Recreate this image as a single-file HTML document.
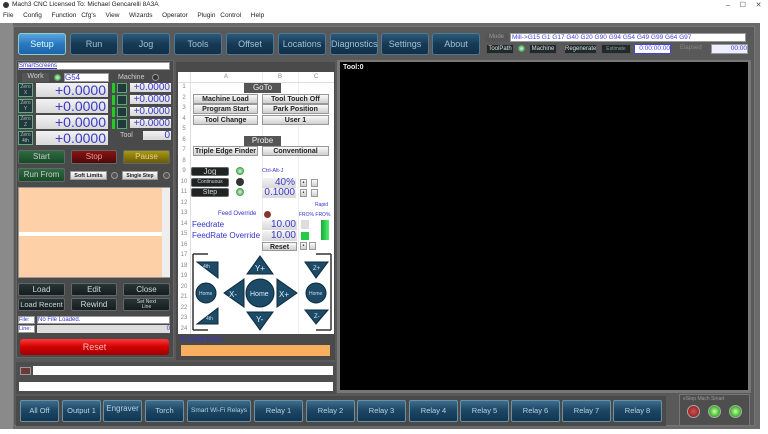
<!DOCTYPE html><html><head><meta charset="utf-8"><style>
*{margin:0;padding:0;box-sizing:border-box}
body{width:768px;height:434px;overflow:hidden;background:#fff;font-family:"Liberation Sans",sans-serif;position:relative}
div,span{position:absolute}
.t{white-space:nowrap}
.tab{top:33px;height:22px;width:48px;border-radius:3px;background:linear-gradient(#2c5a7a,#173a55 50%,#123049);border:1px solid #4a7a98;color:#9cc3dc;font-size:9px;text-align:center;line-height:20px;white-space:nowrap}
.dk{background:#1f2a2c;border:1px solid #555;color:#ddd;text-align:center;font-size:7px;white-space:nowrap}
.wf{background:#fff;border:1px solid #999}
.dro{background:linear-gradient(#f2f2f2,#d8d8d8);color:#3a3ac8;text-align:right;font-size:14px;line-height:14px;padding-right:2px}
.mdro{background:linear-gradient(#f2f2f2,#d8d8d8);color:#3a3ac8;text-align:right;font-size:10px;line-height:9px;padding-right:1px}
.zb{background:#1e3a3a;border:1px solid #6a8;color:#bbb;font-size:5px;text-align:center;line-height:6px}
.gb{background:#1e3a3a;border:1px solid #5a7;color:#bbb;font-size:4px;text-align:center}
.bb{background:linear-gradient(#2a3436,#151d1f);border:1px solid #5c6a6a;color:#cfd8d8;font-size:8px;text-align:center;border-radius:2px;white-space:nowrap;overflow:hidden}
.sb{background:linear-gradient(#fafafa,#cfcfcf);border:1px solid #999;font-size:7px;font-weight:bold;text-align:center;line-height:9px;color:#222;white-space:nowrap}
.rn{left:178px;width:12px;font-size:6px;color:#888;text-align:center}
.bl{top:400px;height:22px;background:linear-gradient(#3e6d8c,#1d4866 45%,#123650);border:1px solid #6a90a8;border-radius:2px;color:#b8d2e4;font-size:7.5px;text-align:center;line-height:20px;white-space:nowrap}
.led{border-radius:50%;background:radial-gradient(#cfe,#5a5 60%,#263);}
.arr{fill:#1d4a66;stroke:#0d2a3c}
</style></head><body>
<div style="left:0;top:0;width:768px;height:10px;background:#fff"></div>
<div style="left:3px;top:2px;width:6px;height:6px;border-radius:50%;background:#333"></div>
<div class="t" style="left:12px;top:1px;font-size:6.5px;color:#222">Mach3 CNC  Licensed To: Michael Gencarelli 8A3A</div>
<div class="t" style="left:726px;top:1px;font-size:7px;color:#444">–&nbsp;&nbsp;&nbsp;&nbsp;&nbsp;☐&nbsp;&nbsp;&nbsp;&nbsp;&nbsp;✕</div>
<div class="t" style="left:3px;top:12px;font-size:6.5px;color:#222;word-spacing:3px">File &nbsp;Config &nbsp;Function&nbsp;Cfg's &nbsp;View &nbsp;Wizards &nbsp;Operator &nbsp;Plugin&nbsp;Control &nbsp;Help</div>
<div style="left:0;top:23px;width:760px;height:406px;background:#6b6b6b"></div>
<div style="left:0;top:23px;width:13px;height:406px;background:#8a8a8a"></div>
<div style="left:13px;top:26px;width:742px;height:400px;background:#595959;border:1px solid #777"></div>
<div class="tab" style="left:18px;background:linear-gradient(#5aa6e0,#2a78c0 50%,#1e64a8);color:#dff;border-color:#8cc">Setup</div>
<div class="tab" style="left:70px">Run</div>
<div class="tab" style="left:122px">Jog</div>
<div class="tab" style="left:174px">Tools</div>
<div class="tab" style="left:226px">Offset</div>
<div class="tab" style="left:278px">Locations</div>
<div class="tab" style="left:330px">Diagnostics</div>
<div class="tab" style="left:381px">Settings</div>
<div class="tab" style="left:432px">About</div>
<div class="dk" style="left:485px;top:33px;width:23px;height:9px;background:#555;color:#999;line-height:7px;font-size:6px">Mode</div>
<div class="wf t" style="left:510px;top:33px;width:236px;height:9px;font-size:6.5px;color:#44d;line-height:7px;padding-left:1px">Mill-&gt;G15  G1 G17 G40 G20 G90 G94 G54 G49 G99 G64 G97</div>
<div class="dk" style="left:486px;top:44px;width:28px;height:10px;line-height:8px;font-size:6px">ToolPath</div>
<div class="led" style="left:518px;top:45px;width:7px;height:7px"></div>
<div class="dk" style="left:529px;top:44px;width:28px;height:10px;line-height:8px;font-size:6px">Machine</div>
<div class="dk" style="left:564px;top:44px;width:33px;height:10px;line-height:8px;font-size:6px">Regenerate</div>
<div class="dk" style="left:601px;top:44px;width:30px;height:10px;line-height:8px;font-size:5px;color:#999">Estimate</div>
<div class="wf" style="left:634px;top:44px;width:37px;height:10px;font-size:6.5px;color:#44d;line-height:8px;border-color:#44d;text-align:right">0:00:00:00</div>
<div class="t" style="left:680px;top:45px;font-size:6px;color:#888">Elapsed</div>
<div class="wf" style="left:711px;top:44px;width:37px;height:10px;font-size:6.5px;color:#44d;line-height:8px;text-align:right;background:#eef">00:00</div>
<div style="left:337px;top:60px;width:414px;height:333px;background:#777"></div>
<div style="left:340px;top:62px;width:408px;height:328px;background:#000"></div>
<div class="t" style="left:343px;top:64px;font-size:7px;color:#eee;font-weight:bold">Tool:0</div>
<div style="left:16px;top:60px;width:158px;height:298px;background:#4a4a4a;border:1px solid #666"></div>
<div class="wf t" style="left:18px;top:62px;width:152px;height:8px;font-size:6px;color:#33c;line-height:6px;text-decoration:underline">SmartScreens</div>
<div class="dk" style="left:22px;top:73px;width:27px;height:9px;background:#555;color:#ccc;font-size:7px;line-height:7px;border:none">Work</div>
<div class="led" style="left:54px;top:74px;width:7px;height:7px"></div>
<div class="wf t" style="left:64px;top:73px;width:45px;height:9px;color:#33c;font-size:8px;line-height:7px">G54</div>
<div class="t" style="left:118px;top:74px;font-size:7px;color:#ccc">Machine</div>
<div style="left:152px;top:74px;width:7px;height:7px;border-radius:50%;border:1px solid #999;background:#333"></div>
<div class="zb" style="left:18px;top:83px;width:15px;height:14px">Zero<br>X</div>
<div class="zb" style="left:18px;top:99px;width:15px;height:14px">Zero<br>Y</div>
<div class="zb" style="left:18px;top:115px;width:15px;height:14px">Zero<br>Z</div>
<div class="zb" style="left:18px;top:131px;width:15px;height:14px">Zero<br>4th</div>
<div class="dro" style="left:36px;top:83px;width:72px;height:14px">+0.0000</div>
<div class="dro" style="left:36px;top:99px;width:72px;height:14px">+0.0000</div>
<div class="dro" style="left:36px;top:115px;width:72px;height:14px">+0.0000</div>
<div class="dro" style="left:36px;top:131px;width:72px;height:14px">+0.0000</div>
<div style="left:112px;top:83px;width:3px;height:10px;background:#2c2"></div>
<div style="left:112px;top:95px;width:3px;height:10px;background:#2c2"></div>
<div style="left:112px;top:107px;width:3px;height:10px;background:#2c2"></div>
<div style="left:112px;top:119px;width:3px;height:10px;background:#2c2"></div>
<div class="gb" style="left:117px;top:83px;width:10px;height:10px"></div>
<div class="gb" style="left:117px;top:95px;width:10px;height:10px"></div>
<div class="gb" style="left:117px;top:107px;width:10px;height:10px"></div>
<div class="gb" style="left:117px;top:119px;width:10px;height:10px"></div>
<div class="mdro" style="left:130px;top:83px;width:41px;height:9px">+0.0000</div>
<div class="mdro" style="left:130px;top:95px;width:41px;height:9px">+0.0000</div>
<div class="mdro" style="left:130px;top:107px;width:41px;height:9px">+0.0000</div>
<div class="mdro" style="left:130px;top:119px;width:41px;height:9px">+0.0000</div>
<div class="t" style="left:120px;top:132px;font-size:7px;color:#ccc">Tool</div>
<div class="mdro" style="left:143px;top:131px;width:28px;height:9px;color:#33c">0</div>
<div class="bb" style="left:18px;top:150px;width:47px;height:14px;background:linear-gradient(#2f6a40,#174a28);color:#ccc;line-height:12px">Start</div>
<div class="bb" style="left:71px;top:150px;width:46px;height:14px;background:linear-gradient(#8a1414,#500808);color:#e99;line-height:12px">Stop</div>
<div class="bb" style="left:123px;top:150px;width:47px;height:14px;background:linear-gradient(#a89a10,#6a5a08);color:#ec8;line-height:12px">Pause</div>
<div class="bb" style="left:18px;top:168px;width:47px;height:14px;background:linear-gradient(#2f6a40,#174a28);color:#ccc;line-height:12px">Run From</div>
<div class="sb" style="left:70px;top:171px;width:37px;height:9px;font-size:5.5px">Soft Limits</div>
<div style="left:111px;top:172px;width:7px;height:7px;border-radius:50%;background:#555;border:1px solid #999"></div>
<div class="sb" style="left:122px;top:171px;width:36px;height:9px;font-size:5px">Single Step</div>
<div style="left:163px;top:172px;width:7px;height:7px;border-radius:50%;background:#555;border:1px solid #999"></div>
<div style="left:18px;top:187px;width:152px;height:91px;background:#fdd0a8;border:1px solid #999"></div>
<div style="left:19px;top:232px;width:143px;height:4px;background:#fff"></div>
<div style="left:162px;top:188px;width:8px;height:89px;background:#eee"></div>
<div class="bb" style="left:18px;top:283px;width:47px;height:13px;line-height:11px">Load</div>
<div class="bb" style="left:71px;top:283px;width:46px;height:13px;line-height:11px">Edit</div>
<div class="bb" style="left:123px;top:283px;width:47px;height:13px;line-height:11px">Close</div>
<div class="bb" style="left:18px;top:298px;width:47px;height:13px;line-height:11px;font-size:7.5px">Load Recent</div>
<div class="bb" style="left:71px;top:298px;width:46px;height:13px;line-height:11px">Rewind</div>
<div class="bb" style="left:123px;top:298px;width:47px;height:13px;font-size:5px;line-height:5px;padding-top:1px;white-space:normal">Set Next<br>Line</div>
<div class="wf t" style="left:18px;top:316px;width:17px;height:8px;font-size:5.5px;color:#33c;line-height:6px">File:</div>
<div class="wf t" style="left:37px;top:316px;width:133px;height:8px;font-size:6px;color:#33c;line-height:6px">No File Loaded.</div>
<div class="wf t" style="left:18px;top:325px;width:17px;height:8px;font-size:5.5px;color:#33c;line-height:6px">Line:</div>
<div class="t" style="left:37px;top:325px;width:133px;height:8px;background:#ddd;font-size:6px;line-height:8px;text-align:right;color:#33c">0</div>
<div style="left:20px;top:339px;width:149px;height:16px;border-radius:3px;background:linear-gradient(#ff3a3a,#d00000 50%,#a00000);color:#fbb;font-size:9px;text-align:center;line-height:16px">Reset</div>
<div style="left:176px;top:62px;width:159px;height:298px;background:#4a4a4a"></div>
<div style="left:178px;top:72px;width:156px;height:262px;background:#fff"></div>
<div style="left:190px;top:72px;width:1px;height:262px;background:#ddd"></div>
<div style="left:262px;top:72px;width:1px;height:262px;background:#eee"></div>
<div style="left:298px;top:72px;width:1px;height:262px;background:#eee"></div>
<div style="left:178px;top:82px;width:156px;height:1px;background:#ddd"></div>
<div class="t" style="left:224px;top:74px;font-size:6px;color:#888">A</div>
<div class="t" style="left:278px;top:74px;font-size:6px;color:#888">B</div>
<div class="t" style="left:314px;top:74px;font-size:6px;color:#888">C</div>
<div class="rn" style="top:84px">1</div><div class="rn" style="top:95px">2</div><div class="rn" style="top:105px">3</div><div class="rn" style="top:116px">4</div><div class="rn" style="top:126px">5</div><div class="rn" style="top:137px">6</div><div class="rn" style="top:147px">7</div><div class="rn" style="top:158px">8</div><div class="rn" style="top:168px">9</div><div class="rn" style="top:179px">10</div><div class="rn" style="top:189px">11</div><div class="rn" style="top:200px">12</div><div class="rn" style="top:210px">13</div><div class="rn" style="top:221px">14</div><div class="rn" style="top:231px">15</div><div class="rn" style="top:242px">16</div><div class="rn" style="top:252px">17</div><div class="rn" style="top:263px">18</div><div class="rn" style="top:273px">19</div><div class="rn" style="top:284px">20</div><div class="rn" style="top:294px">21</div><div class="rn" style="top:305px">22</div><div class="rn" style="top:315px">23</div><div class="rn" style="top:326px">24</div>
<div style="left:244px;top:83px;width:37px;height:10px;background:#555;color:#eee;font-size:8px;text-align:center;line-height:10px">GoTo</div>
<div class="sb" style="left:193px;top:94px;width:65px;height:10px">Machine Load</div>
<div class="sb" style="left:262px;top:94px;width:67px;height:10px">Tool Touch Off</div>
<div class="sb" style="left:193px;top:104px;width:65px;height:10px">Program Start</div>
<div class="sb" style="left:262px;top:104px;width:67px;height:10px">Park Position</div>
<div class="sb" style="left:193px;top:115px;width:65px;height:10px">Tool Change</div>
<div class="sb" style="left:262px;top:115px;width:67px;height:10px">User 1</div>
<div style="left:244px;top:136px;width:37px;height:10px;background:#555;color:#eee;font-size:8px;text-align:center;line-height:10px">Probe</div>
<div class="sb" style="left:193px;top:146px;width:65px;height:10px">Triple Edge Finder</div>
<div class="sb" style="left:262px;top:146px;width:67px;height:10px">Conventional</div>
<div class="bb" style="left:191px;top:167px;width:38px;height:9px;font-size:8px;line-height:7px;background:#222">Jog</div>
<div class="led" style="left:236px;top:167px;width:8px;height:8px"></div>
<div class="t" style="left:262px;top:168px;font-size:5.5px;color:#33c">Ctrl-Alt-J</div>
<div class="bb" style="left:191px;top:178px;width:38px;height:9px;font-size:5px;line-height:7px;background:#222">Continuous</div>
<div style="left:236px;top:178px;width:8px;height:8px;border-radius:50%;background:#333"></div>
<div class="bb" style="left:191px;top:188px;width:38px;height:9px;font-size:7px;line-height:7px;background:#222">Step</div>
<div class="led" style="left:236px;top:188px;width:8px;height:8px"></div>
<div class="mdro" style="left:262px;top:178px;width:34px;height:10px;line-height:10px">40%</div>
<div class="mdro" style="left:262px;top:188px;width:34px;height:10px;line-height:10px">0.1000</div>
<div class="sb" style="left:300px;top:179px;width:7px;height:8px;font-size:5px;line-height:6px">•</div>
<div class="sb" style="left:311px;top:179px;width:7px;height:8px"></div>
<div class="sb" style="left:300px;top:189px;width:7px;height:8px;font-size:5px;line-height:6px">•</div>
<div class="sb" style="left:311px;top:189px;width:7px;height:8px"></div>
<div class="t" style="left:315px;top:202px;font-size:5px;color:#33c">Rapid</div>
<div class="t" style="left:218px;top:211px;font-size:6px;color:#33c">Feed Override</div>
<div style="left:264px;top:211px;width:7px;height:7px;border-radius:50%;background:#833"></div>
<div class="t" style="left:299px;top:212px;font-size:5px;color:#33c">FRO% FRO%</div>
<div class="t" style="left:192px;top:220px;font-size:8px;color:#33c">Feedrate</div>
<div class="t" style="left:192px;top:231px;font-size:8px;color:#33c">FeedRate Override</div>
<div class="mdro" style="left:262px;top:220px;width:35px;height:10px;line-height:10px">10.00</div>
<div class="mdro" style="left:262px;top:231px;width:35px;height:10px;line-height:10px">10.00</div>
<div style="left:301px;top:220px;width:8px;height:9px;background:#ddd"></div>
<div style="left:301px;top:232px;width:8px;height:8px;background:#2c4"></div>
<div style="left:321px;top:220px;width:8px;height:20px;background:linear-gradient(90deg,#1a3,#5e7)"></div>
<div class="sb" style="left:262px;top:242px;width:35px;height:9px">Reset</div>
<div class="sb" style="left:300px;top:242px;width:7px;height:8px;font-size:5px;line-height:6px">•</div>
<div class="sb" style="left:309px;top:242px;width:7px;height:8px"></div>
<svg style="position:absolute;left:190px;top:252px" width="144" height="82">
<path d="M3 2H18M3 2V78M3 78H18" stroke="#333" fill="none" stroke-width="1.5"/>
<path d="M141 2H126M141 2V78M141 78H126" stroke="#333" fill="none" stroke-width="1.5"/>
<path class="arr" d="M7 10 L28 10 L28 26 Z"/><text x="13" y="16" font-size="5" fill="#cde">4th</text>
<circle class="arr" cx="16" cy="41" r="10"/><text x="9" y="43" font-size="5" fill="#cde">Home</text>
<path class="arr" d="M7 72 L28 72 L28 56 Z"/><text x="16" y="68" font-size="5" fill="#cde">4th</text>
<path class="arr" d="M57 22 L70 4 L83 22 Z"/><text x="65" y="19" font-size="8" fill="#def">Y+</text>
<path class="arr" d="M57 60 L70 78 L83 60 Z"/><text x="66" y="70" font-size="8" fill="#def">Y-</text>
<path class="arr" d="M54 27 L34 41 L54 55 Z"/><text x="39" y="45" font-size="8" fill="#def">X-</text>
<path class="arr" d="M87 27 L107 41 L87 55 Z"/><text x="89" y="45" font-size="8" fill="#def">X+</text>
<circle class="arr" cx="70" cy="41" r="14"/><text x="60" y="44" font-size="7" fill="#def">Home</text>
<path class="arr" d="M115 10 L138 10 L126 26 Z"/><text x="123" y="18" font-size="6" fill="#def">Z+</text>
<circle class="arr" cx="126" cy="41" r="10"/><text x="119" y="43" font-size="5" fill="#cde">Home</text>
<path class="arr" d="M115 58 L138 58 L126 72 Z"/><text x="124" y="66" font-size="6" fill="#def">Z-</text>
</svg>
<div class="t" style="left:180px;top:336px;font-size:7px;color:#33d">G-Code Entry</div>
<div style="left:181px;top:345px;width:149px;height:11px;background:#f8b060"></div>
<div style="left:16px;top:362px;width:320px;height:32px;background:#4e4e4e"></div>
<div style="left:20px;top:367px;width:11px;height:8px;background:#6a3a3a;border:1px solid #999"></div>
<div style="left:33px;top:366px;width:300px;height:9px;background:#fff"></div>
<div style="left:19px;top:382px;width:314px;height:9px;background:#fff"></div>
<div style="left:16px;top:396px;width:650px;height:30px;background:#4a4a4a"></div>
<div class="bl" style="left:20px;width:39px">All Off</div>
<div class="bl" style="left:62px;width:39px">Output 1</div>
<div class="bl" style="left:103px;width:39px;line-height:16px;font-size:8px">Engraver</div>
<div class="bl" style="left:145px;width:39px">Torch</div>
<div class="bl" style="left:187px;width:64px;font-size:6.5px">Smart Wi-Fi Relays</div>
<div class="bl" style="left:254px;width:49px">Relay 1</div>
<div class="bl" style="left:306px;width:49px">Relay 2</div>
<div class="bl" style="left:357px;width:49px">Relay 3</div>
<div class="bl" style="left:409px;width:49px">Relay 4</div>
<div class="bl" style="left:460px;width:49px">Relay 5</div>
<div class="bl" style="left:511px;width:49px">Relay 6</div>
<div class="bl" style="left:562px;width:49px">Relay 7</div>
<div class="bl" style="left:613px;width:49px">Relay 8</div>
<div style="left:679px;top:394px;width:71px;height:32px;background:#4e4e4e;border:1px solid #777"></div>
<div class="t" style="left:683px;top:396px;font-size:5px;color:#999">eStop Mach Smart</div>
<div style="left:687px;top:405px;width:13px;height:13px;border-radius:50%;background:radial-gradient(#c55,#811);border:1px solid #aaa"></div>
<div class="led" style="left:708px;top:405px;width:13px;height:13px;background:radial-gradient(#cfa,#4b3 60%,#272);border:1px solid #aaa"></div>
<div class="led" style="left:729px;top:405px;width:13px;height:13px;background:radial-gradient(#cfa,#4b3 60%,#272);border:1px solid #aaa"></div>
</body></html>
